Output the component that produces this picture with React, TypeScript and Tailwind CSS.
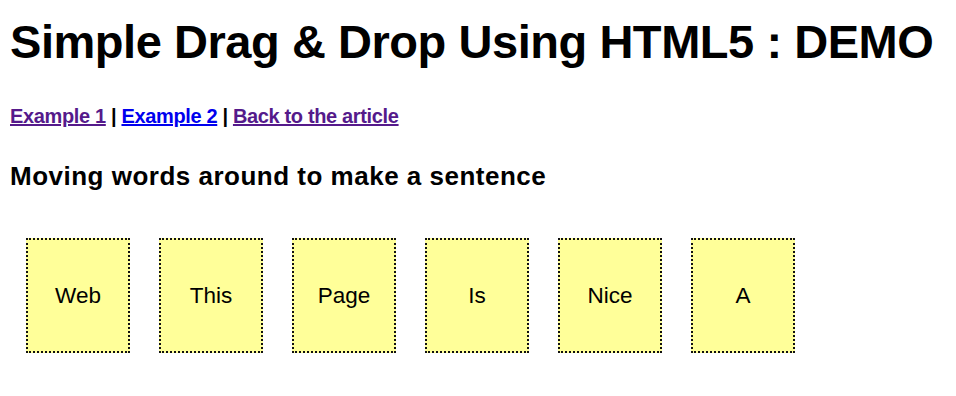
const words = ["Web", "This", "Page", "Is", "Nice", "A"];

export default function App() {
  return (
    <div className="min-h-screen bg-white px-[10px] text-black font-['Liberation_Sans',Arial,sans-serif]">
      {/* Title */}
      <h1 className="pt-[18px] text-[47px] leading-[47px] font-bold tracking-[-0.45px] whitespace-nowrap">
        Simple Drag &amp; Drop Using HTML5 : DEMO
      </h1>

      {/* Links */}
      <p className="mt-[41px] text-[20px] leading-[20px] font-bold tracking-[-0.35px]">
        <a href="#" className="underline text-[#551a8b]">Example 1</a> |{" "}
        <a href="#" className="underline text-[#0000ee]">Example 2</a> |{" "}
        <a href="#" className="underline text-[#551a8b]">Back to the article</a>
      </p>

      {/* Subheading */}
      <h2 className="mt-[37px] text-[26px] leading-[26px] font-bold tracking-[0.5px]">
        Moving words around to make a sentence
      </h2>

      {/* Word boxes */}
      <div className="mt-[49px] ml-[16px] flex gap-[29px]">
        {words.map((w) => (
          <div
            key={w}
            draggable
            className="w-[104px] h-[115px] flex items-center justify-center border-2 border-dotted border-[#111] bg-[#ffff99] text-[22.5px]"
          >
            {w}
          </div>
        ))}
      </div>
    </div>
  );
}
